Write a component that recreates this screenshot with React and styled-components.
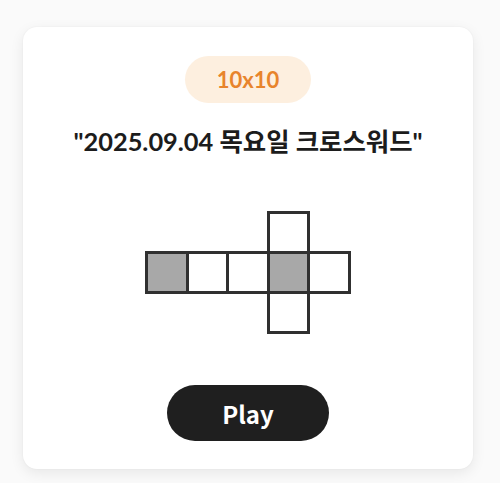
import React from "react";
import styled, { createGlobalStyle } from "styled-components";

const GlobalStyle = createGlobalStyle`
  html, body {
    margin: 0;
    padding: 0;
    background: #fafafa;
  }
  body {
    font-family: "Lato", "Noto Sans CJK KR", sans-serif;
  }
`;

// cells of the preview: [column, row, filled]
const cells = [
  [1, 2, true],
  [2, 2, false],
  [3, 2, false],
  [4, 1, false],
  [4, 2, true],
  [4, 3, false],
  [5, 2, false],
];

function App() {
  return (
    <>
      <GlobalStyle />
      <Page>
        <Card>
          <Badge>10x10</Badge>
          <Title>"2025.09.04 목요일 크로스워드"</Title>
          <Grid>
            {cells.map(([col, row, filled]) => (
              <Cell key={`${col}-${row}`} $col={col} $row={row} $filled={filled} />
            ))}
          </Grid>
          <PlayButton>Play</PlayButton>
        </Card>
      </Page>
    </>
  );
}

const Page = styled.div`
  padding: 27px 0 14px 23px;
`;

const Card = styled.div`
  box-sizing: border-box;
  width: 450px;
  height: 442px;
  background: #ffffff;
  border-radius: 14px;
  box-shadow: 0 4px 14px rgba(0, 0, 0, 0.08), 0 0 2px rgba(0, 0, 0, 0.05);
  padding-top: 29px;
  display: flex;
  flex-direction: column;
  align-items: center;
`;

const Badge = styled.div`
  height: 47px;
  padding: 0 32px;
  border-radius: 24px;
  background: #fdefdf;
  color: #e8842c;
  font-family: "Lato", sans-serif;
  font-weight: 700;
  font-size: 22px;
  display: flex;
  align-items: center;
`;

const Title = styled.h2`
  margin: 22px 0 0;
  font-family: "Lato", "Noto Sans CJK KR", sans-serif;
  font-weight: 700;
  font-size: 25.4px;
  line-height: 32px;
  color: #1c1c1c;
`;

const Grid = styled.div`
  margin-top: 55px;
  display: grid;
  grid-template-columns: repeat(5, 40.6px);
  grid-template-rows: repeat(3, 40px);
`;

const Cell = styled.div`
  grid-column: ${(p) => p.$col};
  grid-row: ${(p) => p.$row};
  margin: -1.5px;
  border: 3px solid #303030;
  background: ${(p) => (p.$filled ? "#a8a8a8" : "#ffffff")};
`;

const PlayButton = styled.button`
  margin-top: 53px;
  width: 162px;
  height: 56px;
  border: none;
  border-radius: 28px;
  background: #1f1f1f;
  color: #ffffff;
  font-family: "Noto Sans CJK KR", "Noto Sans", sans-serif;
  font-weight: 700;
  font-size: 24px;
  cursor: pointer;
  display: flex;
  align-items: center;
  justify-content: center;
`;

export default App;
